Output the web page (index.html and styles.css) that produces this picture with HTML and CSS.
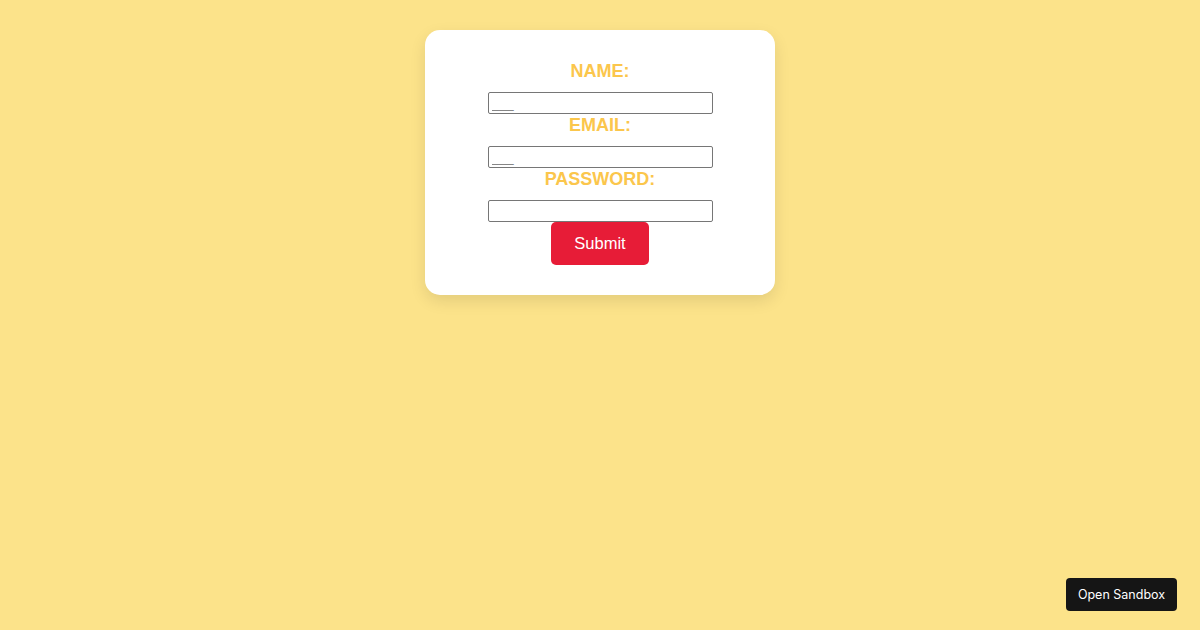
FILE: index.html
```html
<!DOCTYPE html>
<html lang="en">
<head>
    <meta charset="UTF-8">
    <meta name="viewport" content="width=device-width, initial-scale=1.0">
    <title>Form</title>
    <link rel="stylesheet" href="styles.css">
</head>
<body>
    <form class="card">
        <label class="field-label" for="name">NAME:</label>
        <input class="field" type="text" id="name" placeholder="___">

        <label class="field-label" for="email">EMAIL:</label>
        <input class="field" type="email" id="email" placeholder="___">

        <label class="field-label" for="password">PASSWORD:</label>
        <input class="field" type="password" id="password">

        <button type="button" class="submit-btn">Submit</button>
    </form>

    <a class="sandbox-btn" href="#">Open Sandbox</a>
</body>
</html>
```

FILE: styles.css
```css
body {
    margin: 0;
    min-height: 630px;
    background: #fce38a;
    font-family: 'Liberation Sans', Arial, sans-serif;
    display: flex;
    justify-content: center;
    align-items: flex-start;
    padding-top: 30px;
    box-sizing: border-box;
}
.card {
    width: 350px;
    box-sizing: border-box;
    padding: 30px 0;
    background: #fff;
    border-radius: 15px;
    box-shadow: 0 6px 16px rgba(0, 0, 0, 0.1);
    display: flex;
    flex-direction: column;
    align-items: center;
}
.field-label {
    display: block;
    font-size: 18px;
    font-weight: bold;
    line-height: 23px;
    color: #fbc64c;
    margin-bottom: 9px;
}
.field {
    width: 225px;
    height: 22px;
    box-sizing: border-box;
    border: 1px solid #767676;
    border-radius: 2px;
    padding: 1px 3px;
    font-family: 'Liberation Sans', Arial, sans-serif;
    font-size: 13.33px;
    margin: 0;
}
.field::placeholder {
    color: #757575;
}
.submit-btn {
    width: 98px;
    height: 43px;
    padding: 0;
    background: #e71c37;
    color: #fff;
    border: none;
    border-radius: 5px;
    font-family: 'Liberation Sans', Arial, sans-serif;
    font-size: 16.5px;
    cursor: pointer;
}
.sandbox-btn {
    position: fixed;
    right: 23px;
    bottom: 19px;
    width: 111px;
    height: 33px;
    box-sizing: border-box;
    display: flex;
    align-items: center;
    justify-content: center;
    background: #151515;
    color: #fff;
    border-radius: 4px;
    font-family: Inter, 'Noto Sans', sans-serif;
    font-size: 12.5px;
    text-decoration: none;
}
```
